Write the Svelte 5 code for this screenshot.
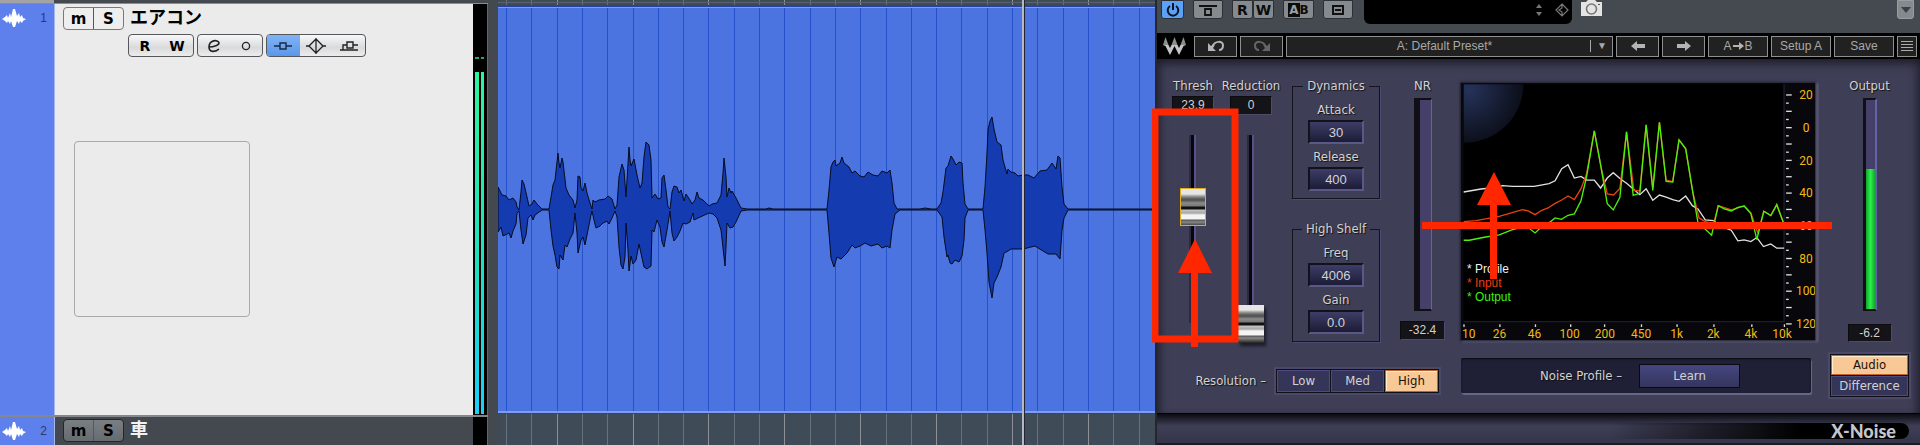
<script>
  let thresh = $state(69);
  let reduction = $state(0);
  let resolution = $state('High');
  let monitor = $state('Audio');

  const resolutions = ['Low', 'Med', 'High'];
  const monitors = ['Audio', 'Difference'];

  const groups = [
    { title: 'Dynamics', fields: [['Attack', '30'], ['Release', '400']] },
    { title: 'High Shelf', fields: [['Freq', '4006'], ['Gain', '0.0']] }
  ];

  const gridLines = Array.from({ length: 26 }, (_, i) => ({
    x: Math.round(9 + i * 25.3),
    bar: i % 3 === 2
  }));

  // upper and lower edge of the clip, both from left to right
  const upper = '0,187 4,195 8,196 11,200 15,198 18,202 19,207 21,210 23,192 24,180 26,184 29,197 31,206 34,204 36,200 39,204 44,209 51,209 53,197 55,185 57,180 60,153 61,163 62,168 64,158 65,162 68,188 71,195 75,200 77,208 79,200 80,176 82,177 83,188 85,191 87,183 89,193 92,203 94,209 95,200 97,202 101,200 107,199 110,196 114,199 117,209 119,205 121,177 124,164 126,170 128,197 131,147 132,160 133,166 136,159 139,175 142,188 144,183 146,157 148,142 151,145 153,160 154,198 157,194 160,199 163,198 164,178 166,175 168,190 170,207 172,209 174,192 176,186 179,187 181,193 183,190 186,201 188,194 192,200 194,204 197,200 199,192 201,198 205,200 211,206 214,204 219,203 223,195 225,173 226,158 228,177 229,197 231,188 233,193 234,191 238,198 243,208 249,209 268,209 271,208 275,209 329,209 331,190 333,167 335,162 337,160 338,166 342,163 344,157 346,163 351,167 354,173 357,171 362,176 366,177 370,172 375,175 380,176 384,171 389,173 392,170 394,183 396,203 399,209 405,209 422,209 427,208 433,209 439,209 443,203 445,192 448,168 450,166 453,156 455,159 458,165 461,162 464,163 465,183 467,204 470,209 485,209 487,187 489,153 490,130 492,121 494,117 496,129 499,142 503,145 505,160 509,174 510,169 513,172 517,173 520,176 525,175 530,175 536,178 542,171 549,170 554,163 558,169 560,156 562,158 564,187 566,204 570,209 657,209';
  const lower = '0,232 3,227 5,236 11,233 13,238 15,231 18,224 19,213 21,211 23,230 25,244 28,235 30,218 33,215 35,220 37,215 44,210 51,210 53,230 55,246 57,255 59,267 61,269 62,255 65,260 67,245 69,247 72,239 75,233 77,213 79,233 80,253 83,240 85,237 87,245 90,230 93,215 94,211 96,220 98,228 102,226 105,223 109,221 111,224 114,218 117,211 119,217 121,247 123,265 125,269 127,257 128,223 130,250 131,271 133,256 135,264 138,260 141,244 144,258 146,267 149,269 153,266 154,230 156,232 159,220 162,227 164,242 166,247 169,230 172,211 174,233 176,241 179,237 182,231 185,223 188,224 192,222 195,213 196,220 200,218 211,213 215,214 219,218 223,230 225,248 227,266 228,247 229,223 232,228 235,227 238,222 243,211 249,210 329,210 331,233 333,258 336,267 339,257 343,259 349,253 354,245 357,248 362,246 367,243 373,246 380,244 384,248 389,246 392,248 394,230 397,214 402,210 439,210 444,217 446,237 449,257 450,255 452,263 454,264 457,260 461,262 464,256 466,240 467,218 470,210 485,210 487,230 489,253 491,282 494,298 496,283 499,277 503,267 506,253 510,251 513,249 525,249 537,246 545,251 550,254 558,254 562,259 564,230 566,218 570,210 657,210';
  const wave = upper + ' ' + lower.split(' ').reverse().join(' ');

  const curves = [
    { color: '#e2e2e2', points: '68,367 120,358 160,354 185,348 215,350 280,350 325,342 343,333 363,297 382,285 401,325 421,320 438,331 461,331 480,355 500,325 518,309 540,328 560,342 598,375 617,357 637,392 657,376 677,382 697,390 716,395 736,379 756,408 773,418 795,451 820,453 840,470 860,477 873,482 893,514 912,511 932,516 950,504 970,531 992,523 1010,536 1032,536' },
    { color: '#e8420e', points: '68,456 105,453 175,440 245,420 262,424 283,435 303,422 322,415 343,401 363,391 382,379 401,390 421,357 438,312 461,183 483,300 500,373 519,376 538,356 558,186 580,362 598,364 617,165 637,355 657,157 677,331 697,336 716,210 736,237 758,370 776,445 795,456 820,462 834,408 873,421 912,409 932,430 953,490 971,425 992,438 1010,405 1032,465' },
    { color: '#4cf20c', points: '68,512 85,512 130,503 175,496 215,480 240,474 262,474 283,490 300,474 322,462 343,445 362,449 382,437 401,433 421,393 438,320 461,183 480,285 500,402 518,421 538,383 558,186 578,377 598,371 617,165 637,362 657,157 677,335 697,337 716,210 736,237 756,360 773,460 795,479 814,497 834,408 852,418 873,424 893,413 912,409 932,432 950,510 971,425 992,438 1010,405 1032,465' }
  ];

  const dbTicks = Array.from({ length: 29 }, (_, i) => 75 + i * 24.6);
  const dbLabels = ['20', '0', '20', '40', '60', '80', '100', '120'];
  // tick position, label, label centre
  const freqs = [
    [68, '10', 83], [176, '26', 176], [283, '46', 281], [389, '100', 387], [491, '200', 493],
    [602, '450', 602], [709, '1k', 709], [820, '2k', 819], [934, '4k', 932], [1032, '10k', 1026]
  ];
  const legend = [['Profile', '#f0f0f0'], ['Input', '#f03c10'], ['Output', '#3cf010']];
</script>

{#snippet waveIcon()}
  <svg class="wave-icon" viewBox="0 0 24 18" width="24" height="18" aria-hidden="true">
    <path d="M0 10 3 8 5 6 6 9 8 4 9 8 11 0 13 0 15 7 17 4 18 8 20 6 21 9 24 10 21 12 20 14 18 12 17 15 15 12 13 18 11 18 9 12 8 15 6 12 5 14 3 12Z" fill="#fff" />
  </svg>
{/snippet}

{#snippet arrow(flip)}
  <svg width="14" height="10" viewBox="0 0 14 10" aria-hidden="true">
    <path d={flip ? 'M0 3H8V0L14 5 8 10V7H0Z' : 'M14 3H6V0L0 5 6 10V7H14Z'} fill="#b4b4b4" />
  </svg>
{/snippet}

<main class="workspace">
  <section class="tracks">
    <div class="track-top"><span></span></div>
    <div class="track track-1">
      <div class="track-tab">{@render waveIcon()}<span>1</span></div>
      <div class="track-main">
        <div class="track-head">
          <div class="group mute-solo"><button>m</button><button>S</button></div>
          <h2>エアコン</h2>
        </div>
        <div class="track-tools">
          <div class="group"><button>R</button><button>W</button></div>
          <div class="group">
            <button aria-label="Edit channel">
              <svg width="14" height="14" viewBox="0 0 14 14"><path d="M2 8C7 8 12 6 12 4 11 0 2 1 2 8 2 14 9 13 12 10" fill="none" stroke="#222" stroke-width="1.6" /></svg>
            </button>
            <button aria-label="Monitor">
              <svg width="10" height="10" viewBox="0 0 10 10"><circle cx="5" cy="5" r="3.6" fill="none" stroke="#222" stroke-width="1.3" /></svg>
            </button>
          </div>
          <div class="group wide">
            <button class="on" aria-label="Inserts">
              <svg width="20" height="18" viewBox="0 0 20 18"><path d="M1 9H7M13 9H19M7 6H13V12H7Z" fill="none" stroke="#1a2840" stroke-width="1.4" /></svg>
            </button>
            <button aria-label="Equalizer">
              <svg width="20" height="18" viewBox="0 0 20 18"><path d="M0 9H3L10 2 17 9H20M3 9 10 16 17 9M10 1V17" fill="none" stroke="#222" stroke-width="1.3" /></svg>
            </button>
            <button aria-label="Sends">
              <svg width="20" height="18" viewBox="0 0 20 18"><path d="M1 13H19M4 13V8H8M14 8H19M8 5H14V11H8Z" fill="none" stroke="#222" stroke-width="1.4" /></svg>
            </button>
          </div>
        </div>
        <div class="picture-slot"></div>
      </div>
      <div class="track-meter">
        <div class="channel"></div>
        <div class="channel"></div>
      </div>
    </div>
    <div class="track track-2">
      <div class="track-tab">{@render waveIcon()}<span>2</span></div>
      <div class="track-main">
        <div class="track-head">
          <div class="group mute-solo dark"><button>m</button><button>S</button></div>
          <h2>車</h2>
        </div>
      </div>
      <div class="track-meter"></div>
    </div>
  </section>

  <section class="timeline">
    <svg viewBox="0 0 657 445" preserveAspectRatio="none" aria-label="Audio clip">
      <rect width="657" height="445" fill="#3f4b57" />
      {#each gridLines as line}
        <rect x={line.x - 1} width="1" height="445" fill={line.bar ? '#8d9197' : '#69727b'} />
      {/each}
      <rect y="2" width="657" height="1" fill="#5b646d" />
      <rect y="5" width="657" height="409" fill="#2443a4" />
      <rect y="7" width="657" height="406" fill="#7d9cf5" />
      <rect y="8" width="657" height="403" fill="#4b74e0" />
      {#each gridLines as line}
        <rect x={line.x - 1} y="8" width="1" height="403" fill="#2552cb" />
      {/each}
      <polygon points={wave} fill="#143bb0" stroke="#050b20" stroke-width="1" />
      <rect x="524" width="2" height="445" fill="#b4b8c4" />
      <rect x="526" width="1" height="445" fill="#222634" />
    </svg>
  </section>

  <section class="plugin">
    <header class="host-bar">
      <button class="host-btn power" aria-label="Activate">
        <svg width="16" height="16" viewBox="0 0 16 16"><path d="M5 4A5.3 5.3 0 1 0 11 4M8 1V8" fill="none" stroke="#0b1424" stroke-width="2" /></svg>
      </button>
      <button class="host-btn" aria-label="Bypass">
        <svg width="20" height="14" viewBox="0 0 20 14"><path d="M1 3H19M7 6H13V12H7Z" fill="none" stroke="#111" stroke-width="1.8" /></svg>
      </button>
      <div class="host-pair">
        <button class="host-btn small">R</button>
        <button class="host-btn small">W</button>
      </div>
      <button class="host-btn ab"><b>A</b>B</button>
      <button class="host-btn" aria-label="Side chain">
        <svg width="14" height="12" viewBox="0 0 14 12"><path d="M2 2H12V10H2ZM4 6H10" fill="none" stroke="#111" stroke-width="2" /></svg>
      </button>
      <button class="program" aria-label="Program">
        <svg width="8" height="14" viewBox="0 0 8 14"><path d="M1 5 4 1 7 5ZM1 9 4 13 7 9Z" fill="#777" /></svg>
        <svg width="14" height="14" viewBox="0 0 14 14"><path d="M7 1 13 7 7 13 1 7ZM7 1V5L4 7 7 9V13" fill="none" stroke="#777" stroke-width="1.2" /></svg>
      </button>
      <button class="camera" aria-label="Snapshot">
        <svg width="23" height="17" viewBox="0 0 23 17"><path d="M1 2H6L8 0H15L17 2H22V16H1Z" fill="#e4e4e4" /><circle cx="11.5" cy="9" r="5" fill="#e4e4e4" stroke="#777" stroke-width="1.6" /><rect x="18" y="4" width="2" height="1" fill="#555" /></svg>
      </button>
      <button class="host-btn more" aria-label="Menu">
        <svg width="12" height="8" viewBox="0 0 12 8"><path d="M1 1H11L6 7Z" fill="#3c4046" /></svg>
      </button>
    </header>

    <nav class="preset-bar">
      <svg class="logo" width="23" height="18" viewBox="0 0 23 18" role="img" aria-label="Waves">
        <path d="M0 8 2.5 0 5.5 8ZM8.5 8 11.5 0 14.5 8ZM17.5 8 20.5 0 23 8Z" fill="#8e8e8e" />
        <path d="M0 8H5.5L7 11 8.5 8H14.5L16 11 17.5 8H23L20.5 9 16 18 11.5 9 7 18 2.5 9Z" fill="#c4c4c4" />
      </svg>
      <button class="icon" aria-label="Undo">
        <svg width="18" height="12" viewBox="0 0 18 12"><path d="M1 3V11H9L6 8 8 5 4 6Z" fill="#b4b4b4" /><path d="M5 7C8 0 16 1 16 5 16 8 15 10 12 10" fill="none" stroke="#b4b4b4" stroke-width="2" /></svg>
      </button>
      <button class="icon" aria-label="Redo">
        <svg width="18" height="12" viewBox="0 0 18 12"><path d="M17 3V11H9L12 8 10 5 14 6Z" fill="#666" /><path d="M13 7C10 0 2 1 2 5 2 8 3 10 6 10" fill="none" stroke="#666" stroke-width="2" /></svg>
      </button>
      <button class="preset"><span>A: Default Preset*</span><i>▼</i></button>
      <button class="icon" aria-label="Previous preset">{@render arrow(false)}</button>
      <button class="icon" aria-label="Next preset">{@render arrow(true)}</button>
      <button class="text">A<svg width="11" height="8" viewBox="0 0 11 8"><path d="M0 3H6V0L11 4 6 8V5H0Z" fill="#b4b4b4" /></svg>B</button>
      <button class="text">Setup A</button>
      <button class="text">Save</button>
      <button class="menu" aria-label="Options">
        <svg width="14" height="12" viewBox="0 0 14 12"><path d="M1 1.5H13M1 4.5H13M1 7.5H13M1 10.5H13" stroke="#aaa" stroke-width="1" /></svg>
      </button>
    </nav>

    <div class="panel">
      <div class="controls">
        <div class="control-row">
          <div class="fader">
            <label for="thresh">Thresh</label>
            <output for="thresh" class="readout">23.9</output>
            <input id="thresh" class="selected" type="range" min="0" max="100" bind:value={thresh} />
          </div>
          <div class="fader">
            <label for="reduction">Reduction</label>
            <output for="reduction" class="readout">0</output>
            <input id="reduction" type="range" min="0" max="100" bind:value={reduction} />
          </div>
          <div class="groups">
            {#each groups as group}
              <fieldset>
                <legend>{group.title}</legend>
                {#each group.fields as [name, value]}
                  <label>{name}<input type="text" {value} /></label>
                {/each}
              </fieldset>
            {/each}
          </div>
          <div class="level nr">
            <span>NR</span>
            <div class="bar"></div>
            <output class="readout">-32.4</output>
          </div>
        </div>
        <div class="resolution">
          <span>Resolution –</span>
          <div class="switch">
            {#each resolutions as name}
              <button class:active={name === resolution} onclick={() => (resolution = name)}>{name}</button>
            {/each}
          </div>
        </div>
      </div>

      <div class="analysis">
        <svg class="graph" viewBox="60 39 1065 774" aria-label="Spectrum">
          <defs>
            <radialGradient id="glow" gradientUnits="userSpaceOnUse" cx="85" cy="60" r="175">
              <stop offset="0" stop-color="#25325a" />
              <stop offset="1" stop-color="#0a0c13" />
            </radialGradient>
          </defs>
          <rect x="60" y="39" width="1065" height="774" fill="#07070c" />
          <rect x="68" y="43" width="962" height="712" fill="#000" />
          <path d="M68 43H248A178 178 0 0 1 68 219Z" fill="url(#glow)" />
          <path d="M1032 43V757H68" fill="none" stroke="#1d1c2c" stroke-width="4" />
          {#each curves as curve}
            <polyline points={curve.points} fill="none" stroke={curve.color} stroke-width="4" />
          {/each}
          {#each dbTicks as y, i}
            <rect x="1038" y={y - 2} width={i % 2 ? 8 : 17} height="4" fill="#ddd" />
          {/each}
          {#each dbLabels as label, i}
            <text class="scale" x="1098" y={88 + i * 98.3} text-anchor="middle">{label}</text>
          {/each}
          {#each freqs as [x, label, labelX]}
            <rect x={x - 1} y="765" width="4" height="8" fill="#ddd" />
            <text class="scale" x={labelX} y="806" text-anchor="middle">{label}</text>
          {/each}
          {#each legend as [name, color], i}
            <text class="key" x="78" y={612 + i * 41} fill={color}>* {name}</text>
          {/each}
        </svg>
        <div class="noise-profile">
          <span>Noise Profile –</span>
          <button>Learn</button>
        </div>
      </div>

      <div class="level out">
        <span>Output</span>
        <div class="bar"><div class="fill" style="height: 67%"></div></div>
        <output class="readout">-6.2</output>
        <div class="switch vertical">
          {#each monitors as name}
            <button class:active={name === monitor} onclick={() => (monitor = name)}>{name}</button>
          {/each}
        </div>
      </div>
    </div>

    <footer><span>X-Noise</span></footer>

    <!-- red notes drawn over the plug-in window -->
    <svg class="notes" viewBox="0 0 768 445" aria-hidden="true">
      <rect x="3" y="112" width="80" height="227" fill="none" stroke="#ff2600" stroke-width="7" />
      <path d="M43 239 60 273H46V347H39V273H26Z" fill="#ff2600" />
      <path d="M270 222H680V229H270Z" fill="#ff2600" />
      <path d="M342 172 359 205H345V279H338V205H325Z" fill="#ff2600" />
    </svg>
  </section>
</main>

<style>
  :global(body) {
    margin: 0;
    background: #44484f;
  }

  .workspace {
    display: grid;
    grid-template-columns: 488fr 667fr 765fr;
    font-family: "Liberation Sans", "Noto Sans CJK JP", sans-serif;
    overflow: hidden;
  }

  button,
  input {
    box-sizing: border-box;
    margin: 0;
    padding: 0;
    border: none;
    background: none;
    font: inherit;
    color: inherit;
  }

  button {
    display: flex;
    align-items: center;
    justify-content: center;
  }

  /* track list */
  .tracks {
    display: flex;
    flex-direction: column;
    min-width: 0;
  }

  .track-top {
    height: 3px;
    background: #44484f;
    border-bottom: 1px solid #8b8d90;
  }

  .track-top span {
    display: block;
    width: 54px;
    height: 3px;
    background: #a3a3a3;
  }

  .track {
    display: flex;
  }

  .track-1 {
    flex: 1;
    background: #ebebeb;
  }

  .track-2 {
    height: 28px;
    border-top: 2px solid #85878b;
    background: #44484f;
  }

  .track-tab {
    display: flex;
    align-items: flex-start;
    justify-content: space-between;
    box-sizing: border-box;
    width: 55px;
    padding: 5px 7px 0 2px;
    border-right: 1px solid #a5b6ef;
    background: #5d80ec;
    color: #2d3a63;
    font-size: 12px;
    line-height: 18px;
  }

  .track-main {
    flex: 1;
    padding: 3px 8px;
  }

  .track-2 .track-main {
    padding-top: 2px;
  }

  .track-head,
  .track-tools {
    display: flex;
    align-items: center;
  }

  .track-head {
    gap: 6px;
  }

  .track-tools {
    gap: 3px;
    margin: 4px 0 0 65px;
  }

  h2 {
    margin: 0;
    font-size: 18px;
    line-height: 23px;
    color: #000;
  }

  .track-2 h2 {
    color: #f2f2f2;
  }

  .group {
    display: flex;
    box-sizing: border-box;
    width: 66px;
    height: 23px;
    border: 1px solid #55575a;
    border-radius: 4px;
    background: linear-gradient(#f8f8f8, #d9dadc 60%, #ececec);
    font: bold 14px "DejaVu Sans", sans-serif;
    color: #000;
    overflow: hidden;
  }

  .group button {
    flex: 1;
  }

  .mute-solo {
    width: 61px;
    border-color: #77797b;
    background: #eee;
    font-size: 15px;
  }

  .mute-solo button + button {
    border-left: 1px solid #55575a;
  }

  .mute-solo.dark {
    border-color: #24272a;
    background: linear-gradient(#7a7f83, #666b6f);
  }

  .group.wide {
    width: 100px;
  }

  .group .on {
    background: linear-gradient(#7fb3f6, #5b97ea);
  }

  .picture-slot {
    box-sizing: border-box;
    width: 176px;
    height: 176px;
    margin: 84px 0 0 11px;
    border: 1px solid #a9a9a9;
    border-radius: 4px;
  }

  .track-meter {
    display: flex;
    gap: 2px;
    box-sizing: border-box;
    width: 15px;
    padding: 53px 3px 1px 2px;
    background: #000;
    border-right: 1px solid #62666a;
  }

  .channel {
    flex: 1;
    background: linear-gradient(#000 15px, #2ff59a 15px, #20dfc0 60%, #18d0fc);
  }

  /* held peak above the running level */
  .channel::before {
    content: "";
    display: block;
    height: 2px;
    background: #22a873;
  }

  /* timeline */
  .timeline {
    display: flex;
    min-width: 0;
    padding-left: 10px;
    background: #44484f;
  }

  .timeline svg {
    width: 100%;
    height: 100%;
  }

  /* plug-in window */
  .plugin {
    position: relative;
    min-width: 0;
    border-left: 2px solid #26272c;
    background: #454a50;
  }

  .host-bar {
    display: flex;
    align-items: flex-start;
    height: 33px;
    padding: 0 6px 0 4px;
  }

  .host-btn {
    box-sizing: border-box;
    width: 30px;
    height: 19px;
    margin-right: 9px;
    border: 1px solid #2c2f33;
    border-radius: 0 0 3px 3px;
    background: #858a8f;
    color: #0c0c0c;
    font: bold 14px "DejaVu Sans", sans-serif;
  }

  .power {
    width: 23px;
    background: #5ba2f7;
  }

  .host-pair {
    display: flex;
    margin-right: 9px;
  }

  .small {
    width: 21px;
    margin-right: 0;
  }

  .ab {
    width: 31px;
    font-size: 12px;
  }

  .ab b {
    padding: 0 1px;
    background: #0c0c0c;
    color: #9a9fa4;
  }

  .program {
    flex: 0 1 208px;
    justify-content: flex-end;
    gap: 12px;
    height: 24px;
    margin: 0 8px 0 2px;
    padding: 0 3px 4px 0;
    border-radius: 0 0 6px 6px;
    background: #000;
  }

  .more {
    width: 17px;
    margin: 0 0 0 auto;
    border-color: #9a9ea2;
  }

  .preset-bar {
    display: flex;
    align-items: center;
    gap: 3px;
    height: 26px;
    padding: 0 3px 0 6px;
    background: #000;
    color: #a8a8a8;
    font-size: 12px;
  }

  .logo {
    margin-right: 5px;
  }

  .preset-bar button {
    height: 21px;
    border: 1px solid #8f8f8f;
    background: #212121;
  }

  .preset-bar .icon {
    width: 43px;
  }

  .preset-bar .text {
    gap: 1px;
    width: 60px;
  }

  .preset-bar .menu {
    width: 20px;
  }

  .preset-bar .preset {
    flex: 1;
  }

  .preset span {
    flex: 1;
    padding-left: 12px;
  }

  .preset i {
    padding: 0 5px 0 6px;
    border-left: 1px solid #a8a8a8;
    font-size: 10px;
    font-style: normal;
    line-height: 12px;
  }

  .panel {
    display: flex;
    padding: 19px 11px 16px 7px;
    background: #3e3e56;
    box-shadow: inset 0 8px 10px -4px #1d1d28, inset 8px 0 10px -6px #22222f, inset -8px 0 10px -6px #22222f;
    color: #d2d2d2;
    font: 13px/16px "DejaVu Sans Condensed", "DejaVu Sans", sans-serif;
    font-stretch: condensed;
    text-shadow: 1px 1px 1px #111;
  }

  .control-row {
    display: flex;
    align-items: flex-start;
  }

  .fader {
    display: flex;
    flex-direction: column;
    align-items: center;
    width: 58px;
  }

  .readout {
    box-sizing: border-box;
    width: 42px;
    height: 19px;
    border: 1px solid #0b0b10;
    border-right-color: #4d4a6a;
    border-bottom-color: #4d4a6a;
    background: #141318;
    font: 12px/17px "Liberation Sans", sans-serif;
    text-align: center;
  }

  .fader .readout {
    margin: 2px 0 20px;
  }

  input[type="range"] {
    appearance: none;
    writing-mode: vertical-lr;
    direction: rtl;
    width: 26px;
    height: 208px;
    background: linear-gradient(90deg, transparent 9px, #2b2a3e 9px 11px, #08080c 11px 14px, #55538a 14px 16px, transparent 16px) no-repeat;
    background-size: 100% 188px;
  }

  input[type="range"]::-webkit-slider-thumb {
    appearance: none;
    box-sizing: border-box;
    width: 26px;
    height: 38px;
    background: linear-gradient(#e6e6e6 0 5px, #a0a0a0 7px, #6a6a6a 9px, #4e4e4e 11px, #8a8a8a 14px, #777 17px, #111 18px 20px, #c4c4c4 21px, #a8a8a8 24px, #f4f4f4 26px 30px, #555 31px, #888 33px, #222 38px);
    box-shadow: 2px 3px 3px #1c1b28;
  }

  input[type="range"].selected::-webkit-slider-thumb {
    border: 1px solid #e0ac1c;
    box-shadow: none;
  }

  .groups {
    display: flex;
    flex-direction: column;
    gap: 22px;
    margin: 0 20px 0 12px;
  }

  fieldset {
    display: flex;
    flex-direction: column;
    gap: 5px;
    box-sizing: border-box;
    width: 88px;
    min-width: 0;
    margin: 0;
    padding: 8px 0 7px;
    border: 1px solid #14141c;
    box-shadow: 1px 1px 0 #4d4b74;
  }

  legend {
    margin: 0 auto;
    padding: 0 4px;
  }

  fieldset label {
    display: flex;
    flex-direction: column;
    align-items: center;
    gap: 2px;
  }

  input[type="text"] {
    width: 56px;
    height: 24px;
    border: 2px solid #12121a;
    border-right-color: #5a5886;
    border-bottom-color: #5a5886;
    background: linear-gradient(#3d3d68, #1c1c36);
    font: 13px "Liberation Sans", sans-serif;
    text-align: center;
  }

  .level {
    display: flex;
    flex-direction: column;
    align-items: center;
  }

  .nr {
    width: 45px;
    margin-right: 16px;
  }

  .bar {
    box-sizing: border-box;
    display: flex;
    align-items: flex-end;
    width: 18px;
    height: 213px;
    margin: 4px 0 10px;
    border: 2px solid #0f0f15;
    border-left-width: 6px;
    border-right: 1px solid #6563a8;
    background: #454069;
  }

  .nr .readout {
    width: 45px;
  }

  .out {
    width: 79px;
    margin-left: 15px;
  }

  .out .bar {
    width: 14px;
    margin-bottom: 13px;
    border-left-width: 3px;
    border-right-width: 2px;
  }

  .fill {
    width: 100%;
    background: linear-gradient(90deg, #14a52c, #2cf04c 50%, #14a52c);
  }

  .out .readout {
    width: 44px;
    height: 18px;
    line-height: 16px;
  }

  .resolution {
    display: flex;
    align-items: center;
    gap: 10px;
    margin: 26px 22px 0 29px;
    justify-content: flex-end;
  }

  .switch {
    display: flex;
    gap: 1px;
    box-sizing: border-box;
    border: 1px solid #101018;
    background: #101018;
    box-shadow: 0 0 1px 2px #4b4967;
  }

  .switch button {
    width: 53px;
    height: 22px;
    border: 1px solid #4b4b82;
    background: #35355a;
  }

  .switch .active {
    border-color: #c06428;
    background: #f8c896;
    box-shadow: inset 1px 1px 1px #fff0d0;
    color: #1c120a;
    text-shadow: none;
  }

  .switch.vertical {
    flex-direction: column;
    width: 100%;
    margin-top: 12px;
  }

  .vertical button {
    width: 100%;
    height: 20px;
  }

  .analysis {
    display: flex;
    flex-direction: column;
    flex: 1;
    min-width: 0;
    margin-top: 5px;
  }

  .graph {
    width: 100%;
    box-shadow: 0 0 2px 1px #1c1b28, 2px 1px 2px 1px #6b6988;
    text-shadow: none;
  }

  .scale {
    fill: #f2ba12;
    font: 36px "Liberation Sans Narrow", "Roboto", sans-serif;
  }

  .key {
    font: 36px "Liberation Sans", sans-serif;
  }

  .noise-profile {
    display: flex;
    align-items: center;
    justify-content: center;
    gap: 17px;
    height: 35px;
    margin: 18px 4px 0 0;
    padding-left: 8px;
    border-radius: 2px;
    background: #1f2036;
    box-shadow: inset 0 1px 2px #08080e, 1px 2px 1px #6b6988;
  }

  .noise-profile button {
    width: 101px;
    height: 24px;
    border: 1px solid #0a0a10;
    background: linear-gradient(#454680, #34355c);
  }

  footer {
    box-sizing: border-box;
    height: 32px;
    padding: 9px 11px 5px 40px;
    border-top: 1px solid #000;
    border-bottom: 2px solid #1b1b22;
    background: linear-gradient(#0c0c12, #3e3e56 12px, #34344a);
  }

  footer span {
    display: block;
    padding-right: 13px;
    border-radius: 0 8px 8px 0;
    background: linear-gradient(90deg, transparent 58%, #000 85%);
    color: #c6c6cc;
    font: 900 18px/16px Lato, sans-serif;
    text-align: right;
  }

  .notes {
    position: absolute;
    top: 0;
    right: 0;
    left: -5px;
    width: calc(100% + 5px);
  }
</style>
